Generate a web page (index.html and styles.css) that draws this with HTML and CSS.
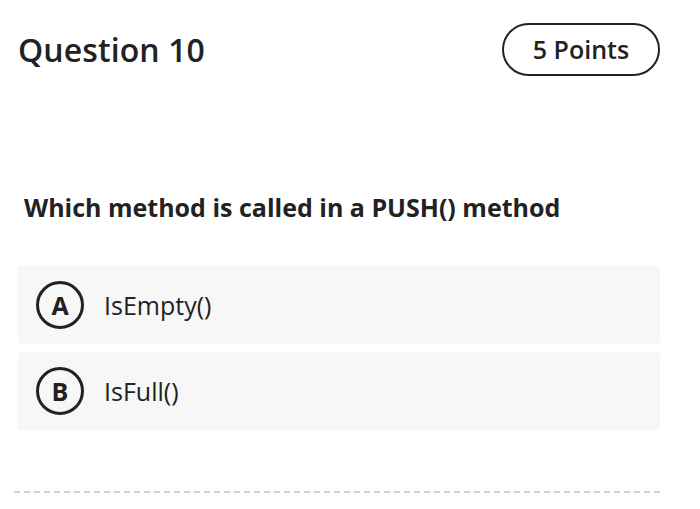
FILE: index.html
```html
<!DOCTYPE html>
<html>
<head>
<meta charset="utf-8">
<link rel="stylesheet" href="styles.css">
</head>
<body>
<div class="page">
  <div class="header">
    <h1 class="title">Question 10</h1>
    <div class="points">5 Points</div>
  </div>
  <p class="question">Which method is called in a PUSH() method</p>
  <div class="options">
    <div class="option"><span class="letter">A</span><span class="label">IsEmpty()</span></div>
    <div class="option"><span class="letter">B</span><span class="label">IsFull()</span></div>
  </div>
  <div class="divider"></div>
</div>
</body>
</html>
```
FILE: styles.css
```css
html, body { margin: 0; padding: 0; background: #fff; }
body { font-family: "Open Sans", "Noto Sans", sans-serif; color: #222; }
.page { width: 700px; height: 509px; padding: 22px 40px 0 18px; box-sizing: border-box; }
.header { display: flex; justify-content: space-between; align-items: center; height: 54px; }
.title { margin: 0; font-size: 32px; font-weight: 600; letter-spacing: 0.1px; }
.points { box-sizing: border-box; width: 158px; height: 53px; border: 2px solid #222; border-radius: 27px; display: flex; align-items: center; justify-content: center; font-size: 25px; font-weight: 600; }
.question { margin: 114px 0 0 6px; font-size: 25px; font-weight: 700; line-height: 34px; }
.options { margin-top: 42px; display: flex; flex-direction: column; gap: 8px; }
.option { height: 78px; background: #f7f7f7; border-radius: 3px; display: flex; align-items: center; padding-left: 18px; }
.letter { box-sizing: border-box; width: 48px; height: 48px; border: 3px solid #222; border-radius: 50%; display: flex; align-items: center; justify-content: center; font-size: 25px; font-weight: 700; }
.label { margin-left: 20px; font-size: 25px; font-weight: 400; }
.divider { margin: 61px 0 0 -4px; border-top: 2px dashed #d0d0d0; width: 646px; }
```
